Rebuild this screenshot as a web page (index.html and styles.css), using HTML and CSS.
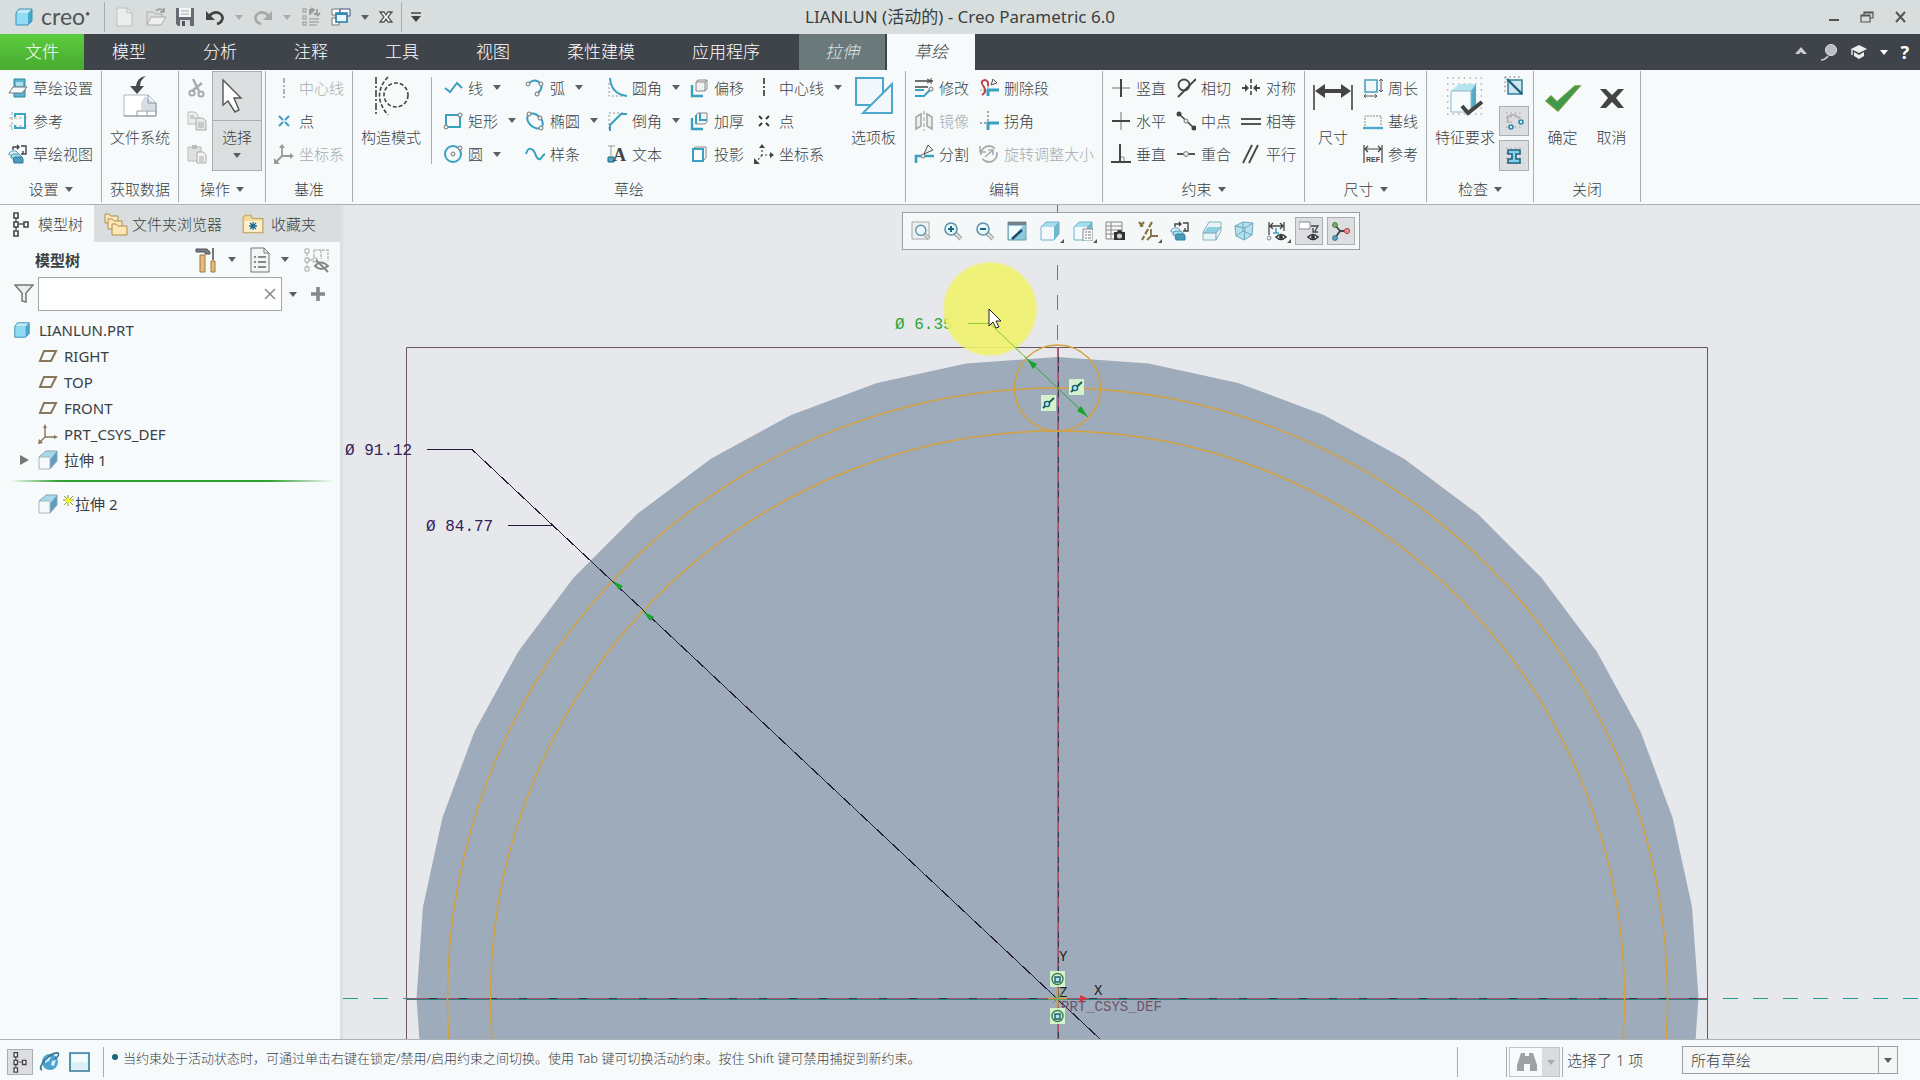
FILE: index.html
```
<!DOCTYPE html>
<html lang="zh-CN">
<head>
  <meta charset="UTF-8" />
  <meta name="viewport" content="width=device-width, initial-scale=1" />
  <title>LIANLUN (活动的) - Creo Parametric 6.0</title>
  <link rel="stylesheet" href="styles.css">
</head>
<body>
  <!-- shared icons -->
  <svg class="defs" width="0" height="0" aria-hidden="true">
    <symbol id="cube" viewBox="0 0 20 20">
      <path d="M2 6 5 2H18V14L14 18H2Z" fill="#4aa8cc"/>
      <path d="M2 6 5 2H18L14 6Z" fill="#bfeaf7"/>
      <path d="M2 6H14V18H2Z" fill="#8fdcf4"/>
      <path d="M2 6 5 2H18V14L14 18H2Z" fill="none" stroke="#3b8fb2"/>
    </symbol>
    <symbol id="glasscube" viewBox="0 0 20 20">
      <path d="M1 6 6 1H19V13L14 19H1Z" fill="#6fb6cf"/>
      <path d="M1 6 6 1H19L14 6Z" fill="#a9dcec"/>
      <path d="M1 6H14V19H1Z" fill="#f4fafc"/>
      <path d="M1 6 6 1H19V13L14 19H1Z" fill="none" stroke="#6fb4cc"/>
    </symbol>
    <symbol id="extrude" viewBox="0 0 20 20">
      <path d="M1 7 8 1H19L14 7Z" fill="#a5d8e8"/>
      <path d="M14 7 19 1V11L12 19V9Z" fill="#5b9fc0"/>
      <path d="M1 7H12V19H1Z" fill="#f5f9fb" stroke="#a9b6bd"/>
      <path d="M1 7 8 1H19V11L12 19" fill="none" stroke="#8aa5b3"/>
    </symbol>
    <symbol id="plane" viewBox="0 0 20 14">
      <path d="M6 2H18L13 12H2Z" fill="none" stroke="#85765c" stroke-width="2"/>
    </symbol>
    <symbol id="orient" viewBox="0 0 20 20">
      <path d="M5 6V3H11M9 1 11 3 9 5M13 2H18V10H13M15 10V7" fill="none" stroke="#444" stroke-width="1.4"/>
      <path d="M1 9 4 7H8L10 9V11H1Z" fill="#dff1f7" stroke="#5fa4bf"/>
      <path d="M3 12 5 10H11L13 12V14H3Z" fill="#a7d8e8" stroke="#4b9abb"/>
      <path d="M5 15 7 13H14L15 15V19H6Z" fill="#4b9abb" stroke="#2f7fa2"/>
    </symbol>
    <symbol id="folder" viewBox="0 0 20 18">
      <path d="M1 3 3 1H8L10 4H19V17H1Z" fill="#f0d898" stroke="#bfa263"/>
      <path d="M2 6H18V16H2Z" fill="#fdf0cc"/>
    </symbol>
    <symbol id="lens" viewBox="0 0 20 20">
      <path d="M12 12 18 18" stroke="#999" stroke-width="4"/>
      <path d="M12 12 18 18" stroke="#e4e4e4" stroke-width="2"/>
      <circle cx="8" cy="8" r="6" fill="#eaf7fb" stroke="#5c94aa" stroke-width="1.6"/>
    </symbol>
    <symbol id="eye" viewBox="0 0 12 8">
      <path d="M1 4Q6-1 11 4Q6 9 1 4Z" fill="#eee" stroke="#333" stroke-width="1.6"/>
      <circle cx="6" cy="4" r="2" fill="#333"/>
    </symbol>
    <symbol id="treeicon" viewBox="0 0 18 26">
      <path d="M4 7V19M7 13H12" stroke="#555" stroke-width="1.4"/>
      <path d="M2 2H6V7H2ZM2 11H6V16H2ZM2 20H6V25H2ZM12 11H16V16H12Z" fill="#fff" stroke="#444" stroke-width="1.6"/>
    </symbol>
  </svg>

  <header class="titlebar">
    <svg class="logo-icon" width="20" height="20"><use href="#cube"/></svg>
    <span class="logo">creo<sup>•</sup></span>
    <span class="vline"></span>
    <div class="quick">
      <button aria-label="新建"><svg width="20" height="20" viewBox="0 0 20 20"><path d="M2 1H12L17 6V19H2Z" fill="#eceeee" stroke="#bcc0c0"/><path d="M12 1V6H17" fill="none" stroke="#bcc0c0"/></svg></button>
      <button class="open" aria-label="打开"><svg width="22" height="20" viewBox="0 0 22 20"><path d="M2 18V5H8L10 7H17V10" fill="#dcdede" stroke="#aaa"/><path d="M2 18 6 10H21L16 18Z" fill="#eee" stroke="#aaa"/><path d="M11 4Q15 0 18 4M19 1V5H15" fill="none" stroke="#999" stroke-width="1.6"/></svg></button>
      <button aria-label="保存"><svg width="20" height="20" viewBox="0 0 20 20"><path d="M1 1H19V19H3L1 17Z" fill="#666b72"/><path d="M4 1H16V10H4Z" fill="#f4f5f6"/><path d="M6 4H14M6 7H14" stroke="#aaa"/><path d="M5 13H15V19H5Z" fill="#d5d9dd"/><path d="M7 14H10V19H7Z" fill="#4f555c"/></svg></button>
      <button aria-label="撤消"><svg width="20" height="20" viewBox="0 0 20 20"><path d="M4 9Q9 4 14 6Q19 9 17 13Q16 16 12 17" fill="none" stroke="#444" stroke-width="2.6"/><path d="M1 4V13H10Z" fill="#444"/></svg></button>
      <i class="caret dim"></i>
      <button aria-label="重做"><svg width="20" height="20" viewBox="0 0 20 20"><path d="M16 9Q11 4 6 6Q1 9 3 13Q4 16 8 17" fill="none" stroke="#a5a9a9" stroke-width="2.6"/><path d="M19 4V13H10Z" fill="#a5a9a9"/></svg></button>
      <i class="caret dim"></i>
      <button aria-label="重新生成"><svg width="20" height="20" viewBox="0 0 20 20"><path d="M2 2H5V5H2ZM2 9H5V12H2ZM2 15H5V18H2ZM8 12H18M8 15H18M8 18H16" fill="none" stroke="#aaa" stroke-width="1.4"/><path d="M9 8V3H12M10 1 13 3 10 6M16 2V7H13M19 6 16 9" fill="none" stroke="#999" stroke-width="1.8"/></svg></button>
      <button aria-label="窗口"><svg width="20" height="20" viewBox="0 0 20 20"><path d="M1 2H9V8H1ZM1 11H8V18H1Z" fill="#fff" stroke="#777"/><path d="M9 2H19V9H9Z" fill="#fff" stroke="#448"/><path d="M5 6H16V15H5Z" fill="#eaf8fd" stroke="#287a9e" stroke-width="1.6"/><path d="M5 6H16V8H5Z" fill="#2f8fb5"/></svg></button>
      <i class="caret"></i>
      <button aria-label="关闭窗口"><svg width="14" height="14" viewBox="0 0 14 14"><path d="M1 2H5L7 5 9 2H13L9 7 13 12H9L7 9 5 12H1L5 7Z" fill="#fff" stroke="#555" stroke-width="1.3"/></svg></button>
    </div>
    <span class="vline"></span>
    <button class="more" aria-label="自定义"><svg width="12" height="10" viewBox="0 0 12 10"><path d="M1 1H11" stroke="#444" stroke-width="1.5"/><path d="M1 4H11L6 10Z" fill="#444"/></svg></button>
    <h1>LIANLUN (活动的) - Creo Parametric 6.0</h1>
    <div class="winbtns">
      <button aria-label="最小化"><svg width="14" height="14" viewBox="0 0 14 14"><path d="M2 10H12" stroke="#555" stroke-width="2"/></svg></button>
      <button aria-label="还原"><svg width="14" height="14" viewBox="0 0 14 14"><path d="M4 5V2H13V8H10M4 3H13M1 5H10V12H1ZM1 6H10" fill="none" stroke="#555" stroke-width="1.2"/></svg></button>
      <button aria-label="关闭"><svg width="14" height="14" viewBox="0 0 14 14"><path d="M3 2 12 12M12 2 3 12" stroke="#555" stroke-width="2"/></svg></button>
    </div>
  </header>

  <nav class="tabs">
    <button class="tab file">文件</button>
    <button class="tab">模型</button>
    <button class="tab">分析</button>
    <button class="tab">注释</button>
    <button class="tab">工具</button>
    <button class="tab">视图</button>
    <button class="tab">柔性建模</button>
    <button class="tab">应用程序</button>
    <button class="tab context">拉伸</button>
    <button class="tab active">草绘</button>
    <div class="tabtools">
      <button aria-label="最小化功能区"><svg width="14" height="14" viewBox="0 0 14 14"><path d="M1 9 7 2 13 9H9L7 7 5 9Z" fill="#c9ccd0"/></svg></button>
      <button aria-label="搜索"><svg width="18" height="20" viewBox="0 0 18 20"><circle cx="11" cy="8" r="5.5" fill="#b8bdc2" stroke="#e4e6e8"/><path d="M8 14Q5 18 1 18" fill="none" stroke="#c9ccd0" stroke-width="1.6"/></svg></button>
      <button aria-label="学习"><svg width="18" height="18" viewBox="0 0 18 18"><path d="M1 6 9 2 17 6 9 10ZM4 9 9 12 14 9V13L9 16 4 13Z" fill="#eee"/><path d="M2 6V12" stroke="#eee" stroke-width="1.4"/></svg></button>
      <i class="caret light"></i>
      <button class="help" aria-label="帮助">?</button>
    </div>
  </nav>

  <section class="ribbon">
    <div class="group">
      <div class="body">
        <div class="rows r1">
          <button class="cmd"><svg viewBox="0 0 20 20"><path d="M6 1H17V19H6Z" fill="#5cb4d4" stroke="#3384a5"/><path d="M8 4H15V8H8Z" fill="#a8def0"/><path d="M5 9H19L14 15H1Z" fill="#f6fafb" stroke="#777"/></svg>草绘设置</button>
          <button class="cmd"><svg viewBox="0 0 20 20"><path d="M1 7H20M1 15H20M4 1V19" stroke="#aaa" stroke-dasharray="3 2"/><path d="M7 6V3H17V6M7 14V17H17V14M17 6V14" fill="none" stroke="#3aa6c8" stroke-width="2"/></svg>参考</button>
          <button class="cmd"><svg><use href="#orient"/></svg>草绘视图</button>
        </div>
      </div>
      <div class="caption">设置<i class="caret"></i></div>
    </div>

    <div class="group">
      <div class="body">
        <button class="big"><svg width="38" height="42" viewBox="0 0 38 42"><path d="M25 1Q16 2 15 11H9L16 19 23 11H19Q19 5 25 1Z" fill="#444a50"/><path d="M3 20H27L35 28V41H3Z" fill="#fff" stroke="#aeb6ba"/><path d="M24 21 35 29V35H20V28Z" fill="#d5dee6"/><path d="M3 41H35V28M16 41V36H35M26 36V41M27 20V28H35" fill="none" stroke="#8e979c"/></svg><span>文件系统</span></button>
      </div>
      <div class="caption">获取数据</div>
    </div>

    <div class="group">
      <div class="body">
        <div class="rows icons r1">
          <button aria-label="剪切"><svg viewBox="0 0 20 20"><path d="M6 1 12 13M15 5 5 13" stroke="#a5aaac" stroke-width="2.4"/><circle cx="5" cy="15" r="2.6" fill="none" stroke="#a5aaac" stroke-width="2"/><circle cx="14" cy="16" r="2.6" fill="none" stroke="#a5aaac" stroke-width="2"/></svg></button>
          <button aria-label="复制"><svg viewBox="0 0 20 20"><path d="M1 1H8L11 4V13H1Z" fill="#eceeee" stroke="#bbb"/><path d="M9 7H16L19 10V19H9Z" fill="#e6e8e8" stroke="#aaa"/><path d="M11 12H17M11 14H17M11 16H17M3 5H7M3 7H8" stroke="#aaa"/></svg></button>
          <button aria-label="粘贴"><svg viewBox="0 0 20 20"><path d="M1 3H14V17H1Z" fill="#dfe1e1" stroke="#bbb"/><path d="M5 1H10V5H5Z" fill="#bbb"/><path d="M10 8H16L19 11V19H10Z" fill="#f2f3f3" stroke="#aaa"/><path d="M12 13H17M12 15H17M12 17H17" stroke="#aaa"/></svg></button>
        </div>
        <button class="select-btn"><span class="half"><svg width="24" height="38" viewBox="0 0 24 38"><path d="M1 3V28L6 24 13 35 17 33 12 21H19Z" fill="#fff" stroke="#555" stroke-width="1.4"/></svg></span>选择<i class="caret"></i></button>
      </div>
      <div class="caption">操作<i class="caret"></i></div>
    </div>

    <div class="group">
      <div class="body">
        <div class="rows r1">
          <button class="cmd off"><svg viewBox="0 0 20 20"><path d="M10 0V20" stroke="#9a9fa2" stroke-width="1.6" stroke-dasharray="5 2 2 2"/></svg>中心线</button>
          <button class="cmd"><svg viewBox="0 0 20 20"><path d="M5 5 15 15M15 5 5 15" stroke="#3d9dbd" stroke-width="2"/><path d="M8 10H12M10 8V12" stroke="#fff"/></svg>点</button>
          <button class="cmd off"><svg viewBox="0 0 20 20"><path d="M8 2V12H18M8 12 2 18" fill="none" stroke="#999" stroke-width="1.8"/><path d="M8 0 11 4H5ZM20 12 16 9V15ZM0 20V14L6 20Z" fill="#999"/></svg>坐标系</button>
        </div>
      </div>
      <div class="caption">基准</div>
    </div>

    <div class="group">
      <div class="body">
        <button class="big construct"><svg width="38" height="42" viewBox="0 0 38 42"><g fill="none" stroke="#444" stroke-width="1.6"><path d="M4 2V40" stroke-dasharray="7 2 2 2"/><path d="M16 2Q-1 20 16 40" stroke-dasharray="4 2"/><circle cx="24" cy="20" r="12" stroke-dasharray="4 2"/></g></svg><span>构造模式</span></button>
        <span class="split"></span>
        <div class="cmdgrid sketch">
          <button class="cmd"><svg viewBox="0 0 20 20"><path d="M2 10 7 14 14 5 19 10" fill="none" stroke="#3aa0c0" stroke-width="2"/></svg>线<i class="caret"></i></button>
          <button class="cmd"><svg viewBox="0 0 20 20"><path d="M3 6Q10-1 16 6Q18 11 12 16" fill="none" stroke="#3aa0c0" stroke-width="2"/><g fill="#eee" stroke="#777"><circle cx="3" cy="6" r="2"/><circle cx="16" cy="6" r="2"/><circle cx="12" cy="16" r="2"/></g></svg>弧<i class="caret"></i></button>
          <button class="cmd"><svg viewBox="0 0 20 20"><path d="M2 5V18H17" fill="none" stroke="#999" stroke-dasharray="2 2"/><path d="M3 0Q4 16 20 18" fill="none" stroke="#3aa0c0" stroke-width="2"/></svg>圆角<i class="caret"></i></button>
          <button class="cmd"><svg viewBox="0 0 20 20"><path d="M3 7V18H14" fill="none" stroke="#3aa0c0" stroke-width="2.4"/><path d="M7 4 9 2H18V11L16 13H7ZM7 4H16V13M16 4 18 2" fill="#f2f2f2" stroke="#888"/></svg>偏移</button>
          <button class="cmd"><svg viewBox="0 0 20 20"><path d="M10 0V20" stroke="#333" stroke-width="1.6" stroke-dasharray="6 2 2 2"/></svg>中心线<i class="caret"></i></button>
          <button class="cmd"><svg viewBox="0 0 20 20"><path d="M3 4H17V16H3Z" fill="none" stroke="#3aa0c0" stroke-width="2"/><g fill="#eee" stroke="#777"><circle cx="17" cy="4" r="2"/><circle cx="3" cy="16" r="2"/></g></svg>矩形<i class="caret"></i></button>
          <button class="cmd"><svg viewBox="0 0 20 20"><ellipse cx="10" cy="10" rx="9" ry="6" transform="rotate(42 10 10)" fill="none" stroke="#3aa0c0" stroke-width="2"/><g fill="#eee" stroke="#777"><circle cx="4" cy="3" r="2"/><circle cx="15" cy="7" r="2"/><circle cx="16" cy="17" r="2"/></g></svg>椭圆<i class="caret"></i></button>
          <button class="cmd"><svg viewBox="0 0 20 20"><path d="M2 18V2H18" fill="none" stroke="#999" stroke-dasharray="2 2"/><path d="M3 20V14L14 3H20" fill="none" stroke="#3aa0c0" stroke-width="2"/></svg>倒角<i class="caret"></i></button>
          <button class="cmd"><svg viewBox="0 0 20 20"><path d="M3 7V18H14" fill="none" stroke="#3aa0c0" stroke-width="2.4"/><path d="M7 4 9 2H18V11L16 13H7Z" fill="#f2f2f2" stroke="#888"/><path d="M11 2V9H18M7 13V4" fill="none" stroke="#3aa0c0" stroke-width="2"/></svg>加厚</button>
          <button class="cmd"><svg viewBox="0 0 20 20"><path d="M5 5 8 8M12 12 15 15M15 5 12 8M8 12 5 15" stroke="#333" stroke-width="1.8"/></svg>点</button>
          <button class="cmd"><svg viewBox="0 0 20 20"><circle cx="10" cy="10" r="8" fill="none" stroke="#3aa0c0" stroke-width="2"/><g fill="#eee" stroke="#777"><circle cx="10" cy="10" r="2"/><circle cx="17" cy="4" r="2"/></g></svg>圆<i class="caret"></i></button>
          <button class="cmd"><svg viewBox="0 0 20 20"><path d="M1 10Q3 2 8 6Q10 8 11 12Q14 18 17 13Q18 11 20 10" fill="none" stroke="#3aa0c0" stroke-width="2"/></svg>样条</button>
          <button class="cmd"><svg viewBox="0 0 20 20"><path d="M1 2H8M4 2V12" stroke="#999"/><path d="M1 13H7V18H1Z" fill="#4aa8cc" stroke="#24607c"/><text class="aicon" x="6" y="17">A</text></svg>文本</button>
          <button class="cmd"><svg viewBox="0 0 20 20"><path d="M4 5 6 3H17V14L15 16" fill="none" stroke="#888"/><path d="M4 5H14V17H4Z" fill="#fafcfc" stroke="#3aa0c0" stroke-width="2"/></svg>投影</button>
          <button class="cmd"><svg viewBox="0 0 20 20"><path d="M8 2V11H18M8 11 2 18" fill="none" stroke="#444" stroke-width="1.2" stroke-dasharray="2 2"/><path d="M8 0 11 4H5ZM20 11 16 8V14ZM0 20V14L6 20Z" fill="#444"/></svg>坐标系</button>
        </div>
        <button class="big"><svg width="40" height="42" viewBox="0 0 40 42"><g fill="#f1f7fa" stroke="#4ba8cc" stroke-width="2"><path d="M2 3H29V30H2Z"/><path d="M38 9V38H9Z"/></g></svg><span>选项板</span></button>
      </div>
      <div class="caption">草绘</div>
    </div>

    <div class="group">
      <div class="body">
        <div class="cmdgrid edit r1">
          <button class="cmd"><svg viewBox="0 0 20 20"><path d="M1 3H19M1 9H14" stroke="#444" stroke-width="1.4"/><path d="M17 0V6M13 1 17 3 13 5" stroke="#444" fill="none"/><path d="M1 12H10M1 18H10L17 11" fill="none" stroke="#3aa0c0" stroke-width="2"/><circle cx="17" cy="11" r="2" fill="#eee" stroke="#777"/></svg>修改</button>
          <button class="cmd"><svg viewBox="0 0 20 20"><path d="M9 18V12H20" fill="none" stroke="#3aa0c0" stroke-width="3"/><path d="M1 12H7M9 10V6" stroke="#999" stroke-dasharray="2 1"/><path d="M3 17Q8 14 5 9Q0 3 6 2Q10 3 9 8" fill="none" stroke="#bb4650" stroke-width="2"/><path d="M12 7 14 1 18 5Z" fill="#eee" stroke="#555"/></svg>删除段</button>
          <button class="cmd off"><svg viewBox="0 0 20 20"><path d="M10 0V20" stroke="#999" stroke-dasharray="4 2"/><path d="M2 6 7 3V15L2 18ZM18 6 13 3V15L18 18Z" fill="#eef0f0" stroke="#aaa" stroke-width="1.6"/></svg>镜像</button>
          <button class="cmd"><svg viewBox="0 0 20 20"><path d="M1 12H8M9 0V11" stroke="#888" stroke-width="1.4" stroke-dasharray="2 2"/><path d="M9 19V12H20" fill="none" stroke="#3aa0c0" stroke-width="3"/></svg>拐角</button>
          <button class="cmd"><svg viewBox="0 0 20 20"><path d="M2 19V12H20" fill="none" stroke="#3aa0c0" stroke-width="2.6"/><circle cx="9" cy="12" r="2" fill="#eee" stroke="#777"/><path d="M10 10 14 1 19 6Z" fill="#eee" stroke="#555"/></svg>分割</button>
          <button class="cmd off"><svg viewBox="0 0 20 20"><circle cx="10" cy="10" r="8" fill="none" stroke="#aaa" stroke-width="1.8" stroke-dasharray="20 4"/><path d="M6 13 13 7M9 6H14V11M1 2V8H7" fill="none" stroke="#aaa" stroke-width="1.6"/></svg>旋转调整大小</button>
        </div>
      </div>
      <div class="caption">编辑</div>
    </div>

    <div class="group">
      <div class="body">
        <div class="cmdgrid constrain r1">
          <button class="cmd"><svg viewBox="0 0 20 20"><path d="M1 10H19" stroke="#999" stroke-width="1.4"/><path d="M10 1V19" stroke="#444" stroke-width="2"/></svg>竖直</button>
          <button class="cmd"><svg viewBox="0 0 20 20"><circle cx="8" cy="7" r="5.5" fill="none" stroke="#444" stroke-width="1.8"/><path d="M2 19 20 1" stroke="#444" stroke-width="1.8"/></svg>相切</button>
          <button class="cmd"><svg viewBox="0 0 20 20"><path d="M10 1V19" stroke="#444" stroke-width="1.6" stroke-dasharray="4 2"/><path d="M1 10H5M19 10H15" stroke="#444" stroke-width="2"/><path d="M4 6 8 10 4 14ZM16 6 12 10 16 14Z" fill="#444"/></svg>对称</button>
          <button class="cmd"><svg viewBox="0 0 20 20"><path d="M10 1V19" stroke="#999" stroke-width="1.4"/><path d="M1 10H19" stroke="#444" stroke-width="2"/></svg>水平</button>
          <button class="cmd"><svg viewBox="0 0 20 20"><path d="M3 3 18 17" stroke="#444" stroke-width="1.6"/><circle cx="3" cy="3" r="2.5" fill="#444"/><circle cx="18" cy="17" r="2.5" fill="#444"/><circle cx="10" cy="10" r="2" fill="#eee" stroke="#777"/></svg>中点</button>
          <button class="cmd"><svg viewBox="0 0 20 20"><path d="M0 8H20M0 13H20" stroke="#555" stroke-width="1.8"/></svg>相等</button>
          <button class="cmd"><svg viewBox="0 0 20 20"><path d="M13 17V13H9" fill="none" stroke="#888"/><path d="M9 0V18M0 18H20" stroke="#444" stroke-width="2"/></svg>垂直</button>
          <button class="cmd"><svg viewBox="0 0 20 20"><path d="M1 10H19" stroke="#444" stroke-width="1.8"/><circle cx="10" cy="10" r="2.4" fill="#eee" stroke="#777"/></svg>重合</button>
          <button class="cmd"><svg viewBox="0 0 20 20"><path d="M2 19 11 1M8 19 17 1" stroke="#444" stroke-width="1.8"/></svg>平行</button>
        </div>
      </div>
      <div class="caption">约束<i class="caret"></i></div>
    </div>

    <div class="group">
      <div class="body">
        <button class="big dim-btn"><svg width="42" height="42" viewBox="0 0 42 42"><path d="M2 10V35M40 10V35" stroke="#444" stroke-width="1.6"/><path d="M9 16H33" stroke="#444" stroke-width="4"/><path d="M3 16 13 9V23ZM39 16 29 9V23Z" fill="#444"/></svg><span>尺寸</span></button>
        <div class="rows">
          <button class="cmd"><svg viewBox="0 0 20 20"><path d="M2 2H14V14H2Z" fill="#eef8fb" stroke="#4a9fc0" stroke-width="1.6"/><path d="M18 1V14M16 3 18 1 20 3M16 12 18 14 20 12M1 18H14M3 16 1 18 3 20M12 16 14 18 12 20" fill="none" stroke="#555"/></svg>周长</button>
          <button class="cmd"><svg viewBox="0 0 20 20"><path d="M2 15V5H18V15" fill="none" stroke="#888" stroke-dasharray="2 1"/><path d="M0 17H20" stroke="#4aa8cc" stroke-width="2.4"/></svg>基线</button>
          <button class="cmd"><svg viewBox="0 0 20 20"><path d="M1 1V19M19 1V19M2 5H18M5 2 2 5 5 8M15 2 18 5 15 8" fill="none" stroke="#444" stroke-width="1.2"/><text class="reficon" x="3" y="18">REF</text></svg>参考</button>
        </div>
      </div>
      <div class="caption">尺寸<i class="caret"></i></div>
    </div>

    <div class="group">
      <div class="body">
        <button class="big check"><svg width="40" height="42" viewBox="0 0 40 42"><path d="M2 3H40M2 9H40M2 15H40M2 21H40M2 27H40M2 33H40M2 39H40" stroke="#aaa" stroke-width="1.4" stroke-dasharray="1.4 4.2"/><path d="M6 16 14 9H31L26 16Z" fill="#b5e4f1"/><path d="M26 16 31 9V29L26 36Z" fill="#55aac5"/><path d="M6 16H26V37H6Z" fill="#f7fbfd" stroke="#8cbccd"/><path d="M17 31 23 38 37 27" fill="none" stroke="#444" stroke-width="4"/></svg><span>特征要求</span></button>
        <div class="rows icons toggles">
          <button aria-label="重叠几何"><svg viewBox="0 0 20 20"><path d="M4 4H18V18H4Z" fill="#cfe6ef" stroke="#2f7f9f" stroke-width="1.5"/><path d="M3 3 18 18" stroke="#225f7c" stroke-width="2.4"/><path d="M1 1H18M1 1V18" stroke="#888" stroke-width="1.4" stroke-dasharray="1.4 3"/></svg></button>
          <button class="on" aria-label="突出显示开放端"><svg viewBox="0 0 20 20"><path d="M2 2H18M2 6H18M2 11H10M2 16H18" stroke="#999" stroke-width="1.2" stroke-dasharray="1.4 3"/><path d="M5 12Q1 5 8 4Q13 3 15 8" fill="none" stroke="#aaa" stroke-width="1.4"/><g fill="#cfeefa" stroke="#2c87ad" stroke-width="1.6"><circle cx="17" cy="11" r="2"/><circle cx="7" cy="16" r="2"/></g></svg></button>
          <button class="on" aria-label="着色封闭环"><svg viewBox="0 0 20 20"><path d="M2 2H20M2 7H20M2 12H20M2 17H20" stroke="#999" stroke-width="1.2" stroke-dasharray="1.4 3"/><path d="M4 4H16V8H12V13H16V17H4V13H8V8H4Z" fill="#7fd3ec" stroke="#22627e" stroke-width="1.6"/></svg></button>
        </div>
      </div>
      <div class="caption">检查<i class="caret"></i></div>
    </div>

    <div class="group">
      <div class="body close">
        <button class="big"><svg width="38" height="42" viewBox="0 0 38 42"><path d="M2 26 7 21 13 27 31 11H36L14 36Z" fill="#3b9a50" stroke="#6a9a3a" stroke-width="1.4"/></svg><span>确定</span></button>
        <button class="big"><svg width="38" height="42" viewBox="0 0 38 42"><path d="M7 14H13L19 20 25 14H31L23 23 31 33H25L19 27 13 33H7L15 23Z" fill="#444"/></svg><span>取消</span></button>
      </div>
      <div class="caption">关闭</div>
    </div>
  </section>

  <main>
    <aside class="side">
      <div class="sidetabs">
        <button class="active"><svg width="18" height="26"><use href="#treeicon"/></svg>模型树</button>
        <button><svg width="24" height="24" viewBox="0 0 24 24"><g fill="#fbe6b4" stroke="#ad8f50"><path d="M1 2H5L7 4H14V11H1Z"/><path d="M4 7H8L10 9H18V17H4Z"/><path d="M8 12H12L14 14H23V23H8Z"/></g></svg>文件夹浏览器</button>
        <button class="fav"><svg width="22" height="20" viewBox="0 0 22 20"><use href="#folder" width="22" height="20"/><path d="M11 8V16M7 12H15M8 9 14 15M14 9 8 15" stroke="#1f6c95" stroke-width="1.3"/></svg>收藏夹</button>
      </div>
      <div class="treehead">
        <h2>模型树</h2>
        <button aria-label="设置"><svg width="22" height="26" viewBox="0 0 22 26"><path d="M1 2H12L15 5V7H10V5H1Z" fill="#777d85" stroke="#555"/><path d="M5 8H10V25H5Z" fill="#e5bd76" stroke="#9d7b3f"/><path d="M18 1V13" stroke="#777" stroke-width="2"/><path d="M16 14H20V25H16Z" fill="#e5bd76" stroke="#9d7b3f"/></svg></button>
        <i class="caret"></i>
        <button aria-label="显示"><svg width="20" height="26" viewBox="0 0 20 26"><path d="M1 1H14L19 6V25H1Z" fill="#f3f5f6" stroke="#777"/><path d="M14 1V6H19" fill="none" stroke="#777"/><path d="M8 10H16M8 15H16M8 20H16M4 10H6M4 15H6M4 20H6" stroke="#666" stroke-width="1.5"/></svg></button>
        <i class="caret"></i>
        <button aria-label="隐藏"><svg width="26" height="26" viewBox="0 0 26 26"><path d="M4 6V20M6 13H10M11 3H25V14M18 3V12M11 3V10" fill="none" stroke="#bbb" stroke-width="1.4" stroke-dasharray="3 1"/><path d="M2 2H6V6H2ZM2 11H6V15H2ZM2 20H6V24H2ZM10 11H14V15H10Z" fill="#f6f8f8" stroke="#aaa"/><path d="M12 19Q18 12 25 19Q18 25 12 19ZM13 13 25 25" fill="none" stroke="#888" stroke-width="2"/></svg></button>
      </div>
      <div class="filter">
        <svg width="20" height="20" viewBox="0 0 20 20"><path d="M1 1H19L12 9V18L8 17V9Z" fill="#eceeef" stroke="#777" stroke-width="1.5"/></svg>
        <div class="searchbox">
          <input type="text" aria-label="过滤模型树">
          <button aria-label="清除"><svg width="12" height="12" viewBox="0 0 12 12"><path d="M1 1 11 11M11 1 1 11" stroke="#888" stroke-width="1.5"/></svg></button>
        </div>
        <i class="caret"></i>
        <button class="plus" aria-label="添加"><svg width="14" height="14" viewBox="0 0 14 14"><path d="M7 0V14M0 7H14" stroke="#85898c" stroke-width="3.6"/></svg></button>
      </div>
      <ul class="tree">
        <li class="root"><svg width="18" height="18"><use href="#cube"/></svg>LIANLUN.PRT</li>
        <li><svg width="20" height="14"><use href="#plane"/></svg>RIGHT</li>
        <li><svg width="20" height="14"><use href="#plane"/></svg>TOP</li>
        <li><svg width="20" height="14"><use href="#plane"/></svg>FRONT</li>
        <li><svg width="20" height="20" viewBox="0 0 20 20"><path d="M7 2V13H18M7 13 2 18" fill="none" stroke="#85765c" stroke-width="1.4"/><path d="M7 0 9 4H5ZM20 13 16 11V15ZM0 20 1 15 5 19Z" fill="#85765c"/></svg>PRT_CSYS_DEF</li>
        <li class="expand"><svg width="20" height="20"><use href="#extrude"/></svg>拉伸 1</li>
      </ul>
      <div class="insert-line"></div>
      <ul class="tree">
        <li class="pending"><svg width="20" height="20"><use href="#extrude"/></svg><svg width="11" height="11" viewBox="0 0 11 11"><path d="M5 0V11M0 5H11M1 1 10 10M10 1 1 10" stroke="#8b9a20"/><circle cx="5.5" cy="5.5" r="2.5" fill="#f6f22a"/></svg>拉伸 2</li>
      </ul>
    </aside>

    <section class="canvas">
      <svg class="drawing" viewBox="343 205 1577 834" preserveAspectRatio="xMidYMid slice">
        <defs>
          <radialGradient id="glow"><stop offset="0.94" stop-color="#f1f26c" stop-opacity="0.9"/><stop offset="1" stop-color="#f1f26c" stop-opacity="0"/></radialGradient>
          <g id="midpoint"><path d="M0 0H15V16H0Z" fill="#d4f3cd"/><path d="M2 13 13 3" stroke="#1f5c52" stroke-width="2"/><circle cx="6" cy="9" r="2.6" fill="#a9e6f2" stroke="#1f5c72" stroke-width="1.4"/></g>
          <g id="coincide"><path d="M0 0H15V16H0Z" fill="#d4f3cd"/><circle cx="7.5" cy="8" r="5.5" fill="none" stroke="#3a7a55" stroke-width="1.4"/><path d="M5 6H10V11H5Z" fill="#a9e6f2" stroke="#1f5c72" stroke-width="1.4"/></g>
        </defs>
        <!-- 44-sided shaded solid -->
        <path id="solid" fill="#9eabbb" d=""/>
        <path d="M406.5 1039V347.5H1707.5V1039" fill="none" stroke="#69555e"/>
        <g class="ref">
          <path d="M1057.5 205V347" stroke-dasharray="15 15"/>
          <path d="M343 998.5H1920" stroke-dasharray="15 15"/>
        </g>
        <path d="M1057.5 347V1039" stroke="#2f9b98"/>
        <path d="M1058.5 347V1039" stroke="#3b3044"/>
        <path d="M1058.5 347V1039" stroke="#a4536b" stroke-dasharray="10 6 3 6"/>
        <path d="M407 998.5H1707" stroke="#2a3a42"/>
        <path d="M407 998.5H1707" stroke="#a4536b" stroke-dasharray="22 8"/>
        <path d="M407 999.5H1707" stroke="#2f7f80"/>
        <g class="sketchline">
          <circle cx="1057.5" cy="998" r="610"/>
          <circle cx="1057.5" cy="998" r="567"/>
          <circle cx="1057.5" cy="388" r="43"/>
        </g>
        <g fill="none" stroke="#241a3d" shape-rendering="crispEdges">
          <path d="M427 449.5H472L1100 1039"/>
          <path d="M508 525.5H553"/>
        </g>
        <path d="M613 581 623 586 619 590ZM643 611 654 617 650 621Z" fill="#17a52b"/>
        <path d="M968 323.5H990L1088 417" fill="none" stroke="#27a838"/>
        <path d="M1027 359 1037 364 1033 369ZM1088 417 1077 411 1081 406Z" fill="#17a52b"/>
        <g class="dims">
          <text x="345" y="455">Ø 91.12</text>
          <text x="426" y="531">Ø 84.77</text>
          <text x="895" y="329" class="green">Ø 6.35</text>
        </g>
        <g class="axis">
          <text x="1059" y="961">Y</text>
          <text x="1094" y="995">X</text>
          <text x="1059" y="997">Z</text>
          <text x="1061" y="1011" class="csys">PRT_CSYS_DEF</text>
        </g>
        <path d="M1080 995 1088 998.5 1080 1002Z" fill="#d23b44"/>
        <path d="M1048 998.5H1067M1057.5 988V1009" stroke="#c9a04a" stroke-width="2"/>
        <path d="M1053 994 1062 1003M1062 994 1053 1003" stroke="#3fa860"/>
        <use href="#midpoint" x="1069" y="379"/>
        <use href="#midpoint" x="1041" y="395"/>
        <use href="#coincide" x="1050" y="971"/>
        <use href="#coincide" x="1050" y="1008"/>
        <circle cx="990" cy="309" r="48" fill="url(#glow)"/>
        <path d="M968 323.5H990L1024 356" fill="none" stroke="#8fce2f"/>
        <path d="M989 309V326L993 322 996 328 999 327 996 321H1001Z" fill="#fff" stroke="#222"/>
      </svg>

      <div class="viewbar">
        <button aria-label="重新调整"><svg viewBox="0 0 20 20"><path d="M1 1H18V18H1Z" fill="#eef1f2" stroke="#aaa"/><use href="#lens" x="3" y="2" width="17" height="18"/></svg></button>
        <button aria-label="放大"><svg viewBox="0 0 20 20"><use href="#lens" width="20" height="20"/><path d="M5 8H11M8 5V11" stroke="#126a86" stroke-width="2"/></svg></button>
        <button aria-label="缩小"><svg viewBox="0 0 20 20"><use href="#lens" width="20" height="20"/><path d="M5 8H11" stroke="#126a86" stroke-width="2"/></svg></button>
        <button aria-label="重画"><svg viewBox="0 0 20 20"><path d="M1 1H19V19H1Z" fill="#8ccadf" stroke="#7399a8"/><path d="M1 1H19V4H1Z" fill="#777d82"/><path d="M2 5H16L4 18H2Z" fill="#f4fbfd"/><path d="M15 9 5 18" stroke="#1b4a66" stroke-width="2.4"/></svg></button>
        <button class="menu" aria-label="显示样式"><svg viewBox="0 0 20 20"><use href="#glasscube" width="20" height="20"/></svg></button>
        <button class="menu" aria-label="已保存方向"><svg viewBox="0 0 20 20"><use href="#glasscube" width="20" height="20"/><path d="M10 8H20V20H10Z" fill="#fafafa" stroke="#888"/><path d="M12 11H14M12 14H14M12 17H14M15 11H18M15 14H18M15 17H18" stroke="#777"/></svg></button>
        <button aria-label="视图管理器"><svg viewBox="0 0 20 20"><path d="M1 1H17V18H1ZM1 5H17M1 9H17M1 13H9M6 1V18" fill="#f7f7f7" stroke="#888"/><path d="M9 11H12L13 9H16L17 11H20V19H9Z" fill="#333"/><circle cx="14.5" cy="15" r="2.6" fill="#ccc"/></svg></button>
        <button class="menu" aria-label="基准显示过滤器"><svg viewBox="0 0 20 20"><path d="M1 1 6 7M6 1 1 7M14 1 4 19" fill="none" stroke="#86733f" stroke-width="2.2" stroke-dasharray="6 2"/><path d="M13 8V15H20M13 15 9 19" fill="none" stroke="#86733f" stroke-width="1.8"/></svg></button>
        <button aria-label="草绘视图"><svg><use href="#orient"/></svg></button>
        <button aria-label="修剪模型"><svg viewBox="0 0 20 20"><path d="M1 11 7 1H19V10L14 19H1Z" fill="#e6f3f7" stroke="#8ab0be"/><path d="M1 12 6 6H19L14 12Z" fill="#8fd0e3"/><path d="M14 12V19M1 12H14L19 6" fill="none" stroke="#7ba7b7"/></svg></button>
        <button aria-label="透视图"><svg viewBox="0 0 20 20"><path d="M1 5 9 1 19 2 18 14 10 19 2 15Z" fill="#b6e0ed" stroke="#6ba7bd"/><path d="M1 5 11 7 19 2M11 7 10 19M9 1V10L2 15M9 10 18 14" fill="none" stroke="#6ba7bd"/></svg></button>
        <button class="menu" aria-label="注释显示"><svg viewBox="0 0 20 20"><path d="M2 1V14M17 1V10M3 5H16M6 2 3 5 6 8M13 2 16 5 13 8" fill="none" stroke="#444" stroke-width="1.3"/><path d="M9 7V12M6 12H12" stroke="#3aa0c0" stroke-width="1.5"/><circle cx="2" cy="17" r="2" fill="#eee" stroke="#888"/><use href="#eye" x="8" y="12" width="12" height="8"/></svg></button>
        <button class="on" aria-label="约束显示"><svg viewBox="0 0 20 20"><path d="M0 1H11V8H0Z" fill="#fff" stroke="#888"/><path d="M12 5H19L16 10M14 7V11H19" fill="none" stroke="#444" stroke-width="1.3"/><use href="#eye" x="8" y="12" width="12" height="8"/></svg></button>
        <button class="on" aria-label="旋转中心"><svg viewBox="0 0 20 20"><path d="M4 4 9 10 4 17M9 10H16" fill="none" stroke="#444" stroke-width="1.8"/><circle cx="4" cy="4" r="2.4" fill="#7cae6f" stroke="#3e7a3a"/><circle cx="16" cy="10" r="2.6" fill="#e89090" stroke="#b04a4a"/><circle cx="4" cy="17" r="2.4" fill="#5fa4c4" stroke="#2f6f92"/></svg></button>
      </div>
    </section>
  </main>

  <footer class="status">
    <button class="tool on" aria-label="导航器"><svg width="16" height="22"><use href="#treeicon"/></svg></button>
    <button class="tool" aria-label="浏览器"><svg width="22" height="22" viewBox="0 0 22 22"><circle cx="11" cy="11" r="8" fill="#4aa3cc"/><path d="M6 8Q9 4 12 6L10 10 6 12ZM13 10 17 9 15 15 12 14Z" fill="#d6eef7"/><path d="M3 19Q-1 17 6 9Q14 1 19 2Q21 4 16 8" fill="none" stroke="#35718f" stroke-width="1.6"/></svg></button>
    <button class="tool" aria-label="全屏"><svg width="22" height="22" viewBox="0 0 22 22"><path d="M1 2H20V20H1Z" fill="#ddf0f7" stroke="#357a96" stroke-width="1.6"/><path d="M3 4H18V11H3Z" fill="#f5fbfd"/></svg></button>
    <span class="vline"></span>
    <p class="message">当约束处于活动状态时，可通过单击右键在锁定/禁用/启用约束之间切换。使用 Tab 键可切换活动约束。按住 Shift 键可禁用捕捉到新约束。</p>
    <span class="vline far"></span>
    <span class="vline"></span>
    <button class="find" aria-label="查找"><svg width="22" height="20" viewBox="0 0 22 20"><path d="M5 1H9V4H13V1H17L21 13V19H14V12H8V19H1V13Z" fill="#9da1a3"/></svg><span><i class="caret dim"></i></span></button>
    <span class="vline"></span>
    <span class="count">选择了 1 项</span>
    <div class="combo">
      <select aria-label="选择过滤器"><option>所有草绘</option></select>
      <i class="caret"></i>
    </div>
  </footer>

  <script>
    // outline of the faceted disc
    const sides = 44;
    let d = '';
    for (let i = 0; i < sides; i++) {
      const a = i * 2 * Math.PI / sides;
      d += (i ? 'L' : 'M') + (1057.5 + 641 * Math.sin(a)).toFixed(1) + ' ' + (998 - 641 * Math.cos(a)).toFixed(1);
    }
    document.getElementById('solid').setAttribute('d', d + 'Z');
  </script>
</body>
</html>
```

FILE: styles.css
```
* {
  box-sizing: border-box;
}
body {
  margin: 0;
  height: 100vh;
  display: flex;
  flex-direction: column;
  overflow: hidden;
  font-family: "Noto Sans", "Noto Sans CJK SC", sans-serif;
  font-size: 15px;
  font-weight: 300;
  line-height: 20px;
  color: #3a3f44;
  background: #f6fafb;
}
button {
  font: inherit;
  color: inherit;
  background: none;
  border: 0;
  padding: 0;
  display: flex;
  align-items: center;
  white-space: nowrap;
  cursor: pointer;
}
svg {
  display: block;
  flex: none;
}
.defs {
  position: absolute;
}
.caret {
  flex: none;
  border: 4px solid transparent;
  border-top: 5px solid #5a5f63;
  border-bottom: 0;
}
.caret.dim {
  border-top-color: #a9adad;
}
.caret.light {
  border-top-color: #fff;
}
.vline {
  width: 1px;
  height: 30px;
  background: #a9aeb0;
}

/* title bar */
.titlebar {
  position: relative;
  display: flex;
  align-items: center;
  height: 34px;
  flex: none;
  padding-left: 14px;
  background: #d8dedd;
}
.logo {
  width: 63px;
  margin: 0 0 4px 7px;
  font-family: "Lato", sans-serif;
  font-size: 23px;
  font-weight: 400;
  color: #50555a;
}
.logo sup {
  font-size: 9px;
  vertical-align: 8px;
}
.quick {
  display: flex;
  align-items: center;
  gap: 10px;
  padding: 0 8px 0 10px;
}
.quick .open {
  margin-right: -2px;
}
.more {
  margin-left: 8px;
}
.titlebar h1 {
  position: absolute;
  left: 0;
  right: 0;
  margin: 0;
  text-align: center;
  font-size: 17px;
  font-weight: 400;
  pointer-events: none;
}
.winbtns {
  display: flex;
  gap: 19px;
  margin-left: auto;
  padding-right: 13px;
}

/* tabs */
.tabs {
  display: flex;
  flex: none;
  height: 36px;
  background: #3f444a;
}
.tab {
  padding: 0 28px;
  margin-right: 1px;
  font-size: 17px;
  color: #fff;
}
.tab.file {
  margin-right: 0;
  padding: 0 25px;
  background: linear-gradient(#5ccb3d, #48ab30);
}
.tab.context {
  margin-left: 10px;
  margin-right: 2px;
  padding: 0 26px;
  font-style: italic;
  background: #6b797b;
  color: #dfe6e6;
}
.tab.active {
  padding: 0 27px;
  font-style: italic;
  background: #f6fafb;
  color: #3a3f44;
}
.tabtools {
  display: flex;
  align-items: center;
  gap: 12px;
  margin-left: auto;
  padding-right: 11px;
}
.help {
  font-size: 18px;
  font-weight: 700;
  color: #fff;
}

/* ribbon */
.ribbon {
  display: grid;
  grid-template-columns: 102px 77px 87px 87px 553px 197px 202px 122px 107px 107px;
  flex: none;
  height: 135px;
  border-bottom: 1px solid #adb2b5;
}
.group {
  display: flex;
  flex-direction: column;
  margin: 1px 0 2px;
  border-right: 1px solid #a9aeb0;
}
.body {
  display: flex;
  height: 100px;
}
.caption {
  display: flex;
  flex: 1;
  align-items: center;
  justify-content: center;
  gap: 6px;
  padding-top: 5px;
}
.rows,
.cmdgrid {
  display: grid;
  grid-template-rows: repeat(3, 1fr);
}
.r1 {
  margin-left: 8px;
}
.cmd svg,
.icons svg {
  width: 20px;
  height: 20px;
}
.cmd {
  gap: 5px;
}
.cmd .caret {
  margin-left: 5px;
}
.off {
  color: #a6abad;
}
.sketch {
  grid-template-columns: 82px 82px 82px 65px 93px;
  margin-left: 11px;
}
.edit {
  grid-template-columns: 65px 1fr;
}
.constrain {
  grid-template-columns: repeat(3, 65px);
}
.big {
  flex-direction: column;
  align-items: center;
  gap: 13px;
  margin: 0 auto;
  padding-top: 4px;
}
.sketch + .big {
  margin-left: 4px;
}
.big span {
  line-height: 14px;
}
.construct {
  margin: 0;
  padding-left: 8px;
}
.split {
  width: 1px;
  margin: 6px 0 7px 10px;
  background: #a9aeb0;
}
.dim-btn {
  margin: 0 9px 0 7px;
}
.check {
  margin: 0 4px 0 8px;
}
.close {
  justify-content: center;
  gap: 11px;
}
.close .big {
  margin: 0;
}
.select-btn {
  flex-direction: column;
  width: 50px;
  margin-left: 5px;
  gap: 6px;
  border: 1px solid #a9aeb0;
  background: #dcdfe0;
}
.half {
  display: flex;
  align-items: center;
  justify-content: center;
  width: 100%;
  height: 49px;
  padding-right: 6px;
  border-bottom: 1px solid #a9aeb0;
}
.toggles {
  gap: 4px;
}
.toggles button {
  width: 30px;
  justify-content: center;
  border: 1px solid transparent;
}
.on,
.toggles .on {
  border: 1px solid #a9aeb0;
  background: #dcdee1;
}

/* work area */
main {
  display: flex;
  flex: 1;
  min-height: 0;
}
.side {
  flex: none;
  width: 343px;
  border-right: 3px solid #dbe0e2;
}
.sidetabs {
  display: flex;
  height: 37px;
  background: #d9dddd;
}
.sidetabs button {
  gap: 4px;
  padding-left: 10px;
}
.sidetabs .active {
  width: 94px;
  gap: 8px;
  padding-left: 12px;
  background: #f6fafb;
}
.sidetabs .fav {
  padding-left: 20px;
  gap: 7px;
}
.treehead {
  display: flex;
  align-items: center;
  height: 35px;
  padding-left: 35px;
}
.treehead h2 {
  width: 160px;
  margin: 0;
  font-size: 15px;
  font-weight: 700;
}
.treehead .caret {
  margin: 0 14px 0 11px;
}
.filter {
  display: flex;
  align-items: center;
  padding-left: 14px;
}
.searchbox {
  display: flex;
  width: 244px;
  height: 34px;
  margin: 0 7px 0 4px;
  padding-right: 5px;
  border: 1px solid #a2a7a9;
  background: #fff;
}
.searchbox input {
  flex: 1;
  min-width: 0;
  border: 0;
  outline: 0;
  font: inherit;
  background: none;
}
.plus {
  margin-left: 14px;
}
.tree {
  margin: 0;
  padding: 6px 0 0;
  list-style: none;
  font-weight: 400;
}
.tree li {
  position: relative;
  display: flex;
  align-items: center;
  gap: 6px;
  height: 26px;
  padding-left: 38px;
}
.tree .root {
  gap: 8px;
  padding-left: 13px;
}
.tree .expand::before {
  content: "";
  position: absolute;
  left: 20px;
  border: 5px solid transparent;
  border-left: 9px solid #777;
  border-right: 0;
}
.tree .pending {
  gap: 0;
}
.pending svg + svg {
  margin: 0 1px 8px 5px;
}
.insert-line {
  height: 2px;
  margin: 7px 6px 3px 10px;
  background: linear-gradient(90deg, transparent, #2fa02f 15%, #2fa02f 80%, transparent);
}
.canvas {
  position: relative;
  flex: 1;
  min-width: 0;
  background: #e7e8ec;
}
.drawing {
  width: 100%;
  height: 100%;
}
.ref {
  fill: none;
  stroke: #1f9a8c;
}
.sketchline {
  fill: none;
  stroke: #d5a13d;
  stroke-width: 1.5;
}
.dims text {
  font-family: "Liberation Mono", monospace;
  font-size: 16px;
  font-weight: 400;
  fill: #35205c;
}
.dims .green {
  fill: #27a838;
}
.axis text {
  font-family: "Liberation Mono", monospace;
  font-size: 14px;
  font-weight: 400;
  fill: #222;
}
.axis .csys {
  fill: #6d5468;
}
.aicon {
  font: bold 18px "Liberation Serif", serif;
  fill: #444;
}
.reficon {
  font: bold 7px "Liberation Sans", sans-serif;
  fill: #444;
}
.viewbar {
  position: absolute;
  top: 7px;
  left: 559px;
  display: flex;
  align-items: center;
  gap: 4px;
  height: 38px;
  padding: 0 4px;
  border: 1px solid #9ba0a4;
  background: #f5f8f9;
}
.viewbar button {
  position: relative;
  width: 28px;
  height: 28px;
  justify-content: center;
}
.viewbar .menu {
  width: 29px;
}
.viewbar svg {
  width: 20px;
  height: 20px;
}
.viewbar .menu::after {
  content: "";
  position: absolute;
  right: 0;
  bottom: 2px;
  border: 2px solid #555;
  border-top-color: transparent;
  border-left-color: transparent;
}

/* status bar */
.status {
  display: flex;
  align-items: center;
  flex: none;
  height: 41px;
  padding: 4px 22px 0 7px;
  border-top: 1px solid #adb2b5;
}
.tool {
  justify-content: center;
  width: 26px;
  height: 26px;
  margin-right: 4px;
}
.tool + .vline {
  margin-left: 6px;
}
.message {
  margin: 0 0 8px 8px;
  font-size: 13px;
  white-space: nowrap;
}
.message::before {
  content: "";
  display: inline-block;
  width: 6px;
  height: 6px;
  margin: 0 5px 3px 0;
  border-radius: 50%;
  background: #1d6478;
}
.far {
  margin: 0 48px 0 auto;
}
.find {
  width: 51px;
  height: 30px;
  margin: 0 2px;
  padding-left: 6px;
  border: 1px solid #c2c6c8;
}
.find span {
  display: flex;
  align-items: center;
  justify-content: center;
  width: 17px;
  height: 100%;
  margin-left: auto;
  background: #d9dcdd;
}
.count {
  width: 115px;
  margin: 0 0 4px 4px;
}
.combo {
  position: relative;
  width: 216px;
  margin-bottom: 4px;
}
.combo select {
  width: 100%;
  height: 28px;
  padding: 0 8px;
  appearance: none;
  border: 1px solid #999fa2;
  border-radius: 0;
  background: linear-gradient(#999fa2, #999fa2) right 18px top / 1px 100% no-repeat #f5f6f6;
  font: inherit;
  color: inherit;
}
.combo .caret {
  position: absolute;
  right: 6px;
  top: 12px;
  pointer-events: none;
}
```
